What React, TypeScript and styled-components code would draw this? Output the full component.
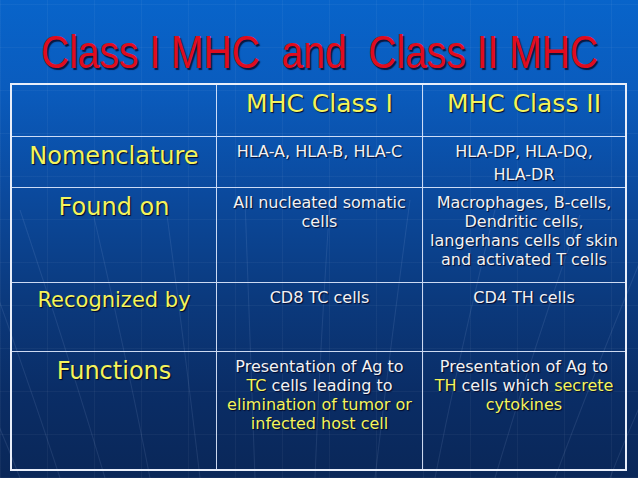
import React from "react";
import styled, { createGlobalStyle } from "styled-components";

const Global = createGlobalStyle`
  html, body { margin: 0; padding: 0; }
  body { width: 638px; height: 478px; overflow: hidden; }
`;

const Slide = styled.div`
  position: relative;
  width: 638px;
  height: 478px;
  overflow: hidden;
  background:
    repeating-linear-gradient(90deg, rgba(255,255,255,0.045) 0 1px, transparent 1px 47px),
    repeating-linear-gradient(0deg, rgba(255,255,255,0.04) 0 1px, transparent 1px 43px),
    linear-gradient(180deg, #0864ca 0%, #0a5cbe 18%, #0b4a9e 40%, #0b3a7e 62%, #0a2d66 82%, #0a2758 100%);
  font-family: "DejaVu Sans", Verdana, sans-serif;
`;

const Decor = styled.svg`
  position: absolute;
  left: 0;
  top: 0;
  width: 638px;
  height: 478px;
  pointer-events: none;
`;

const Content = styled.div`
  position: relative;
  display: flex;
  flex-direction: column;
`;

const TitleBar = styled.div`
  height: 83px;
  padding: 28px 0 0 41px;
  box-sizing: border-box;
`;

const Title = styled.h1`
  margin: 0;
  display: inline-block;
  font-family: "Liberation Sans", Arial, sans-serif;
  font-weight: normal;
  font-size: 47px;
  line-height: 47px;
  white-space: pre;
  color: #e00c1e;
  text-shadow: 2px 2px 1px rgba(10, 10, 40, 0.85);
  transform: scaleX(0.83);
  transform-origin: left top;
`;

const Table = styled.div`
  margin-left: 10px;
  width: 617px;
  height: 388px;
  box-sizing: border-box;
  border: 2px solid #e8eefa;
  display: flex;
  flex-direction: column;
`;

const Row = styled.div<{ $h?: number }>`
  display: grid;
  grid-template-columns: 204px 206px 1fr;
  height: ${(p) => (p.$h ? `${p.$h}px` : "auto")};
  flex: ${(p) => (p.$h ? "none" : "1")};
  box-sizing: border-box;
  border-bottom: 1px solid rgba(225, 235, 255, 0.9);
  &:last-child { border-bottom: none; }
`;

const Cell = styled.div`
  box-sizing: border-box;
  text-align: center;
  padding: 5px 2px 0;
  &:not(:first-child) { border-left: 1px solid rgba(225, 235, 255, 0.9); }
`;

const Label = styled.div<{ $size: number }>`
  font-size: ${(p) => p.$size}px;
  line-height: 1.2;
  color: #f4f45c;
  text-shadow: 1px 1px 1px rgba(0, 0, 30, 0.9);
  white-space: nowrap;
`;

const HeadCell = styled(Cell)`
  padding-top: 4px;
`;

const Body = styled.div`
  font-size: 16px;
  line-height: 19px;
  color: #f2f2f4;
  text-shadow: 1px 1px 1px rgba(0, 0, 30, 0.85);
  white-space: nowrap;
`;

const Para = styled.div`
  & + & { margin-top: 4px; }
`;

const Hi = styled.span`
  color: #f4f45c;
`;

const curves = [
  "M 20 478 Q -10 400 -60 300",
  "M 60 478 Q 25 370 -30 220",
  "M 105 478 Q 70 360 20 210",
  "M 150 478 Q 125 350 90 200",
  "M 200 478 Q 185 350 165 200",
  "M 255 478 Q 250 350 245 200",
  "M 315 478 Q 320 350 330 200",
  "M 375 478 Q 390 350 410 200",
  "M 435 478 Q 460 350 495 210",
  "M 495 478 Q 530 360 580 215",
  "M 555 478 Q 595 370 655 225",
  "M 610 478 Q 640 400 690 300",
];

export default function App() {
  return (
    <Slide>
      <Global />
      <Decor viewBox="0 0 638 478">
        {curves.map((d, i) => (
          <path key={i} d={d} fill="none" stroke="rgba(200,220,255,0.1)" strokeWidth="1.1" />
        ))}
      </Decor>
      <Content>
        <TitleBar>
          <Title>{"Class I MHC  and  Class II MHC"}</Title>
        </TitleBar>
        <Table>
          <Row $h={52}>
            <HeadCell />
            <HeadCell><Label $size={25}>MHC Class I</Label></HeadCell>
            <HeadCell><Label $size={25}>MHC Class II</Label></HeadCell>
          </Row>
          <Row $h={51}>
            <Cell><Label $size={24}>Nomenclature</Label></Cell>
            <Cell><Body>HLA-A, HLA-B, HLA-C</Body></Cell>
            <Cell>
              <Body>
                <Para>HLA-DP, HLA-DQ,</Para>
                <Para>HLA-DR</Para>
              </Body>
            </Cell>
          </Row>
          <Row $h={95}>
            <Cell><Label $size={24}>Found on</Label></Cell>
            <Cell><Body>All nucleated somatic<br />cells</Body></Cell>
            <Cell>
              <Body>
                Macrophages, B-cells,<br />Dendritic cells,<br />langerhans cells of skin<br />and activated T cells
              </Body>
            </Cell>
          </Row>
          <Row $h={69}>
            <Cell><Label $size={21}>Recognized by</Label></Cell>
            <Cell><Body>CD8 TC cells</Body></Cell>
            <Cell><Body>CD4 TH cells</Body></Cell>
          </Row>
          <Row>
            <Cell><Label $size={24}>Functions</Label></Cell>
            <Cell>
              <Body>
                Presentation of Ag to<br />
                <Hi>TC</Hi> cells leading to<br />
                <Hi>elimination of tumor or</Hi><br />
                <Hi>infected host cell</Hi>
              </Body>
            </Cell>
            <Cell>
              <Body>
                Presentation of Ag to<br />
                <Hi>TH</Hi> cells which <Hi>secrete</Hi><br />
                <Hi>cytokines</Hi>
              </Body>
            </Cell>
          </Row>
        </Table>
      </Content>
    </Slide>
  );
}
